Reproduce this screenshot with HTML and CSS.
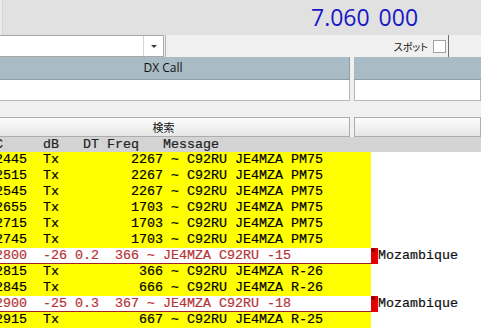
FILE: index.html
```html
<!DOCTYPE html>
<html lang="ja">
<head>
    <meta charset="UTF-8">
    <title>JTDX</title>
    <link rel="stylesheet" href="styles.css">
</head>
<body>

    <!-- Frequency display -->
    <div class="topbar">
        <span class="edge"></span>
        <span class="freq">7.060&nbsp;000</span>
    </div>

    <!-- Combo + spot -->
    <div class="toolrow">
        <div class="combo">
            <div class="combo-btn"><span class="arrow"></span></div>
        </div>
        <div class="vsep"></div>
        <div class="spot">
            <span class="spot-label">スポット</span>
            <span class="checkbox"></span>
        </div>
        <div class="vsep dark"></div>
        <div class="tail"></div>
    </div>

    <!-- DX Call columns -->
    <div class="columns">
        <div class="col col-left">
            <div class="col-head">DX Call</div>
            <div class="col-input"></div>
            <div class="col-gap"></div>
            <div class="col-button">検索</div>
        </div>
        <div class="col col-right">
            <div class="col-head"></div>
            <div class="col-input"></div>
            <div class="col-gap"></div>
            <div class="col-button"></div>
        </div>
    </div>

    <!-- Decode list -->
    <div class="list">
        <div class="list-head">UTC     dB   DT Freq   Message</div>

        <div class="row"><div class="msg">082445  Tx         2267 ~ C92RU JE4MZA PM75</div></div>
        <div class="row"><div class="msg">082515  Tx         2267 ~ C92RU JE4MZA PM75</div></div>
        <div class="row"><div class="msg">082545  Tx         2267 ~ C92RU JE4MZA PM75</div></div>
        <div class="row"><div class="msg">082655  Tx         1703 ~ C92RU JE4MZA PM75</div></div>
        <div class="row"><div class="msg">082715  Tx         1703 ~ C92RU JE4MZA PM75</div></div>
        <div class="row"><div class="msg">082745  Tx         1703 ~ C92RU JE4MZA PM75</div></div>
        <div class="row rx"><div class="msg">082800  -26 0.2  366 ~ <span class="call">JE4MZA C92RU -15</span></div><div class="mark">*</div><div class="country">Mozambique</div></div>
        <div class="row"><div class="msg">082815  Tx          366 ~ C92RU JE4MZA R-26</div></div>
        <div class="row"><div class="msg">082845  Tx          666 ~ C92RU JE4MZA R-26</div></div>
        <div class="row rx"><div class="msg">082900  -25 0.3  367 ~ <span class="call">JE4MZA C92RU -18</span></div><div class="mark">*</div><div class="country">Mozambique</div></div>
        <div class="row"><div class="msg">082915  Tx          667 ~ C92RU JE4MZA R-25</div></div>
    </div>

</body>
</html>
```

FILE: styles.css
```css
/* General */
* {
    margin: 0;
    padding: 0;
    box-sizing: border-box;
}
body {
    width: 481px;
    height: 329px;
    overflow: hidden;
    background: #ffffff;
    color: #111111;
    font-family: "Open Sans", "Noto Sans CJK JP", sans-serif;
    font-size: 12px;
}

/* Frequency bar */
.topbar {
    height: 35px;
    background: #e1e1e1;
    display: flex;
    align-items: stretch;
}
.topbar .edge {
    width: 3px;
    border-right: 1px solid #d2d2d2;
    background: #ebebeb;
}
.freq {
    margin-left: 308px;
    color: #1818c4;
    font-size: 23px;
    line-height: 34px;
    word-spacing: 3px;
}

/* Combo row */
.toolrow {
    height: 22px;
    display: flex;
    background: #f0f0f0;
}
.combo {
    margin-left: -23px;
    width: 187px;
    background: #ffffff;
    border: 1px solid #a8a8a8;
    display: flex;
    justify-content: flex-end;
}
.combo-btn {
    width: 20px;
    border-left: 1px solid #d4d4d4;
    display: flex;
    align-items: center;
    justify-content: center;
}
.arrow {
    width: 0;
    height: 0;
    border-left: 3px solid transparent;
    border-right: 3px solid transparent;
    border-top: 3px solid #3c3c3c;
}
.vsep {
    width: 1px;
    margin-left: 1px;
    background: #b4b4b4;
}
.vsep.dark {
    margin-left: 2px;
    background: #6e6e6e;
}
.spot {
    margin-left: auto;
    display: flex;
    align-items: center;
    gap: 5px;
}
.spot-label {
    font-family: "Noto Sans CJK JP", sans-serif;
    font-size: 10px;
    font-feature-settings: "palt";
    color: #111111;
}
.checkbox {
    width: 13px;
    height: 13px;
    background: #ffffff;
    border: 1px solid #a2a2a2;
}
.tail {
    width: 32px;
}

/* DX Call columns */
.columns {
    display: flex;
    gap: 4px;
    background: #f0f0f0;
}
.col-left {
    margin-left: -23px;
    width: 373px;
}
.col-right {
    flex: 1;
}
.col-head {
    height: 23px;
    background: #a9bbc4;
    border-bottom: 1px solid #8c9ea7;
    text-align: center;
    line-height: 22px;
    color: #111111;
}
.col-left .col-head {
    border-right: 1px solid #8c9ea7;
}
.col-input {
    height: 21px;
    background: #ffffff;
    border: 1px solid #b8b8b8;
    border-top: none;
}
.col-gap {
    height: 16px;
}
.col-button {
    height: 20px;
    border: 1px solid #adadad;
    background: linear-gradient(#fcfcfc, #e6e6e6);
    text-align: center;
    line-height: 18px;
    font-family: "Noto Sans CJK JP", sans-serif;
    font-size: 11px;
}

/* Decode list */
.list {
    font-family: "Liberation Mono", monospace;
    font-size: 13.333px;
    line-height: 16px;
    -webkit-text-stroke: 0.2px;
}
.list-head {
    height: 15px;
    line-height: 16px;
    margin-left: -21px;
    background: #d4d4d4;
    color: #222222;
    white-space: pre;
}
.row {
    display: flex;
    height: 16px;
}
.msg {
    margin-left: -21px;
    width: 392px;
    background: #ffff00;
    color: #000000;
    white-space: pre;
}
.row.rx .msg {
    background: #ffffff;
    color: #b43434;
    border-bottom: 1px solid #9c2424;
}
.mark {
    width: 7px;
    background: #e40000;
    color: #5a0000;
    font-size: 10px;
    line-height: 12px;
    text-indent: -1px;
    overflow: hidden;
}
.country {
    color: #111111;
}
```
